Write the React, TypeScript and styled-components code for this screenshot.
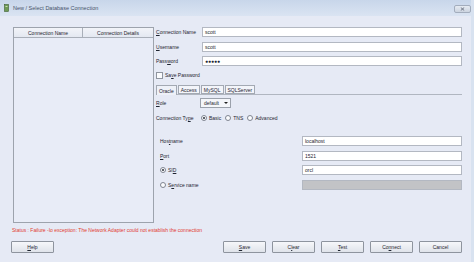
import React from 'react'
import styled, { createGlobalStyle } from 'styled-components'

const GlobalStyle = createGlobalStyle`
  * { box-sizing: border-box; }
  html, body { margin: 0; padding: 0; }
  body {
    width: 474px;
    height: 262px;
    overflow: hidden;
    font-family: "Liberation Sans", Arial, sans-serif;
    font-size: 5px;
    color: #1e2430;
    background: #e5e9f4;
  }
`

const Window = styled.div`
  width: 474px;
  height: 262px;
  display: flex;
  flex-direction: column;
  background: #e6eaf5;
  border-right: 3px solid #d8e2f0;
`

const TitleBar = styled.div`
  height: 16px;
  flex: none;
  display: flex;
  align-items: center;
  padding: 0 0 0 4px;
  background: linear-gradient(#c8d6ea, #dae4f2);
`

const TitleText = styled.span`
  margin-left: 4px;
  font-size: 5.5px;
  color: #46536a;
  flex: 1;
`

const CloseButton = styled.div`
  width: 17px;
  height: 8px;
  margin-top: 2px;
  border: 1px solid #a3adbd;
  border-radius: 2px;
  background: linear-gradient(#e6ebf2, #ccd4e0);
  display: flex;
  align-items: center;
  justify-content: center;
`

const Body = styled.div`
  flex: 1;
  display: flex;
  flex-direction: column;
  padding: 11px 9px 0 11px;
`

const MainRow = styled.div`
  display: flex;
  height: 196px;
`

const Table = styled.div`
  width: 141px;
  margin-left: 2px;
  height: 196px;
  border: 1px solid #9da3ad;
  background: #e8ecf7;
  display: flex;
  flex-direction: column;
`

const TableHeader = styled.div`
  display: grid;
  grid-template-columns: 69px 1fr;
  height: 10px;
  border-bottom: 1px solid #a9afb9;
  background: linear-gradient(#f2f4f9, #e4e8f1);
`

const HeaderCell = styled.div<{ $last?: boolean }>`
  display: flex;
  align-items: center;
  justify-content: center;
  border-right: ${(p) => (p.$last ? 'none' : '1px solid #a9afb9')};
`

const Form = styled.div`
  flex: 1;
  margin-left: 2px;
  display: flex;
  flex-direction: column;
`

const FieldRow = styled.div<{ $labelWidth: number }>`
  display: grid;
  grid-template-columns: ${(p) => p.$labelWidth}px 1fr;
  align-items: center;
  height: 10px;
  margin-bottom: 4.5px;
`

const Label = styled.label`
  white-space: nowrap;
`

const U = styled.span`
  text-decoration: underline;
`

const TextInput = styled.div<{ $disabled?: boolean }>`
  height: 10px;
  border: 1px solid #b3b8c2;
  background: ${(p) => (p.$disabled ? '#c2c3c6' : '#ffffff')};
  padding-left: 2px;
  display: flex;
  align-items: center;
  font-size: 5px;
`

const CheckRow = styled.div`
  display: flex;
  align-items: center;
  height: 8px;
  margin-top: 0.5px;
  gap: 2px;
`

const CheckBox = styled.span`
  width: 7px;
  height: 7px;
  border: 1px solid #8f959f;
  background: #fafbfd;
`

const Tabs = styled.div`
  display: flex;
  height: 9px;
  margin-top: 6px;
`

const Tab = styled.div<{ $active?: boolean }>`
  height: ${(p) => (p.$active ? '10px' : '9px')};
  padding: 0 2px;
  margin-right: 1px;
  display: flex;
  align-items: center;
  border: 1px solid #a3a9b3;
  border-bottom: ${(p) => (p.$active ? 'none' : '1px solid #a3a9b3')};
  background: ${(p) => (p.$active ? '#eef1f8' : '#f3f5fa')};
  position: relative;
  z-index: ${(p) => (p.$active ? 1 : 0)};
`

const Panel = styled.div`
  border-top: 1px solid #b0b6c0;
  flex: 1;
  padding: 3px 0 0 0;
  display: flex;
  flex-direction: column;
`

const RoleRow = styled.div`
  display: grid;
  grid-template-columns: 44px auto;
  justify-content: start;
  align-items: center;
  height: 10px;
`

const Select = styled.div`
  width: 31px;
  height: 10px;
  border: 1px solid #9ba1ab;
  background: #f4f6fa;
  display: flex;
  align-items: center;
  padding-left: 3px;
  gap: 5px;
`

const Arrow = styled.span`
  width: 0;
  height: 0;
  border-left: 2px solid transparent;
  border-right: 2px solid transparent;
  border-top: 2.5px solid #222;
`

const TypeRow = styled.div`
  display: grid;
  grid-template-columns: 41px auto auto auto;
  justify-content: start;
  align-items: center;
  column-gap: 4px;
  height: 8px;
  margin-top: 6px;
`

const RadioOption = styled.span`
  display: inline-flex;
  align-items: center;
  gap: 2px;
  white-space: nowrap;
`

const RadioCircle = styled.span<{ $checked?: boolean }>`
  width: 6px;
  height: 6px;
  border-radius: 50%;
  border: 1px solid #7f8590;
  background: #fbfcfe;
  display: inline-flex;
  align-items: center;
  justify-content: center;
  &::after {
    content: '';
    width: 2px;
    height: 2px;
    border-radius: 50%;
    background: ${(p) => (p.$checked ? '#2a2f38' : 'transparent')};
  }
`

const HostBlock = styled.div`
  margin-top: 14px;
  padding-left: 4px;
  display: flex;
  flex-direction: column;
`

const Status = styled.div`
  color: #e23a30;
  margin-top: 4px;
  margin-left: 1px;
  height: 8px;
  white-space: nowrap;
`

const ButtonRow = styled.div`
  display: flex;
  align-items: center;
  margin-top: 6px;
`

const Spacer = styled.div`
  flex: 1;
`

const Button = styled.button`
  width: 43px;
  height: 12px;
  margin-left: 6px;
  padding: 0;
  font-family: inherit;
  font-size: 5px;
  color: #1e2430;
  border: 1px solid #8e949e;
  border-radius: 1px;
  background: linear-gradient(#f6f7fa, #dfe3ea);
  &:first-child {
    margin-left: 0;
  }
`

const DbIcon = () => (
  <svg width="5" height="8" viewBox="0 0 5 8">
    <rect x="0.5" y="0.5" width="4" height="7" fill="#6f9a55" stroke="#3f5f32" strokeWidth="0.6" />
    <rect x="1.5" y="2" width="2" height="1" fill="#c9dfb4" />
  </svg>
)

const XIcon = () => (
  <svg width="5" height="4" viewBox="0 0 5 4" style={{ display: 'block' }}>
    <path d="M0.8 0.5 L4.2 3.5 M4.2 0.5 L0.8 3.5" stroke="#5a6272" strokeWidth="0.8" />
  </svg>
)

const App = () => {
  return (
    <>
      <GlobalStyle />
      <Window>
        <TitleBar>
          <DbIcon />
          <TitleText>New / Select Database Connection</TitleText>
          <CloseButton>
            <XIcon />
          </CloseButton>
        </TitleBar>
        <Body>
          <MainRow>
            <Table>
              <TableHeader>
                <HeaderCell>Connection Name</HeaderCell>
                <HeaderCell $last>Connection Details</HeaderCell>
              </TableHeader>
            </Table>
            <Form>
              <FieldRow $labelWidth={46}>
                <Label><U>C</U>onnection Name</Label>
                <TextInput>scott</TextInput>
              </FieldRow>
              <FieldRow $labelWidth={46}>
                <Label><U>U</U>sername</Label>
                <TextInput>scott</TextInput>
              </FieldRow>
              <FieldRow $labelWidth={46}>
                <Label>Pass<U>w</U>ord</Label>
                <TextInput>●●●●●</TextInput>
              </FieldRow>
              <CheckRow>
                <CheckBox />
                <span>Sa<U>v</U>e Password</span>
              </CheckRow>
              <Tabs>
                <Tab $active>Oracle</Tab>
                <Tab>Access</Tab>
                <Tab>MySQL</Tab>
                <Tab>SQLServer</Tab>
              </Tabs>
              <Panel>
                <RoleRow>
                  <Label><U>R</U>ole</Label>
                  <Select>
                    default
                    <Arrow />
                  </Select>
                </RoleRow>
                <TypeRow>
                  <Label>Connection Ty<U>p</U>e</Label>
                  <RadioOption><RadioCircle $checked /><span>Basic</span></RadioOption>
                  <RadioOption><RadioCircle /><span>TNS</span></RadioOption>
                  <RadioOption><RadioCircle /><span>Advanced</span></RadioOption>
                </TypeRow>
                <HostBlock>
                  <FieldRow $labelWidth={142}>
                    <Label>Hos<U>t</U>name</Label>
                    <TextInput>localhost</TextInput>
                  </FieldRow>
                  <FieldRow $labelWidth={142}>
                    <Label><U>P</U>ort</Label>
                    <TextInput>1521</TextInput>
                  </FieldRow>
                  <FieldRow $labelWidth={142}>
                    <RadioOption><RadioCircle $checked /><span>SI<U>D</U></span></RadioOption>
                    <TextInput>orcl</TextInput>
                  </FieldRow>
                  <FieldRow $labelWidth={142}>
                    <RadioOption><RadioCircle /><span>S<U>e</U>rvice name</span></RadioOption>
                    <TextInput $disabled />
                  </FieldRow>
                </HostBlock>
              </Panel>
            </Form>
          </MainRow>
          <Status>Status : Failure -Io exception: The Network Adapter could not establish the connection</Status>
          <ButtonRow>
            <Button><U>H</U>elp</Button>
            <Spacer />
            <Button><U>S</U>ave</Button>
            <Button>C<U>l</U>ear</Button>
            <Button><U>T</U>est</Button>
            <Button>Co<U>n</U>nect</Button>
            <Button>Cancel</Button>
          </ButtonRow>
        </Body>
      </Window>
    </>
  )
}

export default App
